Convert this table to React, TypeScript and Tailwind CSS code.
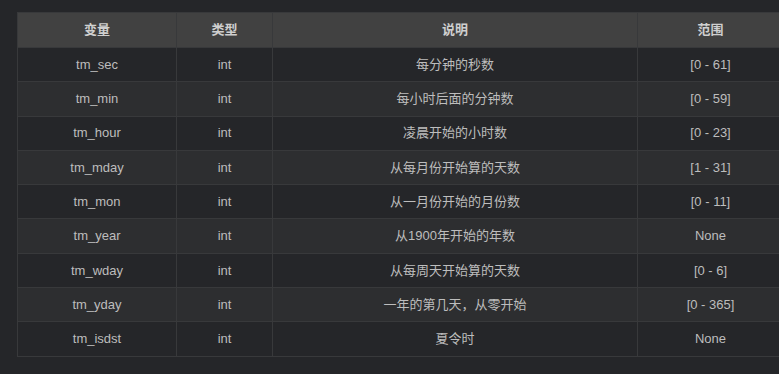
import React from "react";

const rows: [string, string, string, string][] = [
  ["tm_sec", "int", "每分钟的秒数", "[0 - 61]"],
  ["tm_min", "int", "每小时后面的分钟数", "[0 - 59]"],
  ["tm_hour", "int", "凌晨开始的小时数", "[0 - 23]"],
  ["tm_mday", "int", "从每月份开始算的天数", "[1 - 31]"],
  ["tm_mon", "int", "从一月份开始的月份数", "[0 - 11]"],
  ["tm_year", "int", "从1900年开始的年数", "None"],
  ["tm_wday", "int", "从每周天开始算的天数", "[0 - 6]"],
  ["tm_yday", "int", "一年的第几天，从零开始", "[0 - 365]"],
  ["tm_isdst", "int", "夏令时", "None"],
];

export default function App() {
  return (
    <div
      className="w-[779px] h-[374px] overflow-hidden bg-[#252629] pt-[12px] pl-[17px]"
      style={{ fontFamily: '"Liberation Sans", Arial, "Noto Sans CJK SC", sans-serif' }}
    >
      <table className="w-[766px] border-collapse table-fixed text-[13px] text-[#bdbdbd]">
        <colgroup>
          <col className="w-[159px]" />
          <col className="w-[96px]" />
          <col className="w-[365px]" />
          <col className="w-[146px]" />
        </colgroup>
        <thead>
          <tr className="bg-[#414141] h-[35px]">
            {["变量", "类型", "说明", "范围"].map((h) => (
              <th key={h} className="border border-[#38393b] font-bold text-[#cfcfcf] text-center p-0">
                {h}
              </th>
            ))}
          </tr>
        </thead>
        <tbody>
          {rows.map((r, i) => (
            <tr key={r[0]} className={`h-[34.3px] ${i % 2 === 0 ? "bg-[#252629]" : "bg-[#2d2e30]"}`}>
              {r.map((c, j) => (
                <td key={j} className="border border-[#38393b] text-center p-0">
                  {c}
                </td>
              ))}
            </tr>
          ))}
        </tbody>
      </table>
    </div>
  );
}
